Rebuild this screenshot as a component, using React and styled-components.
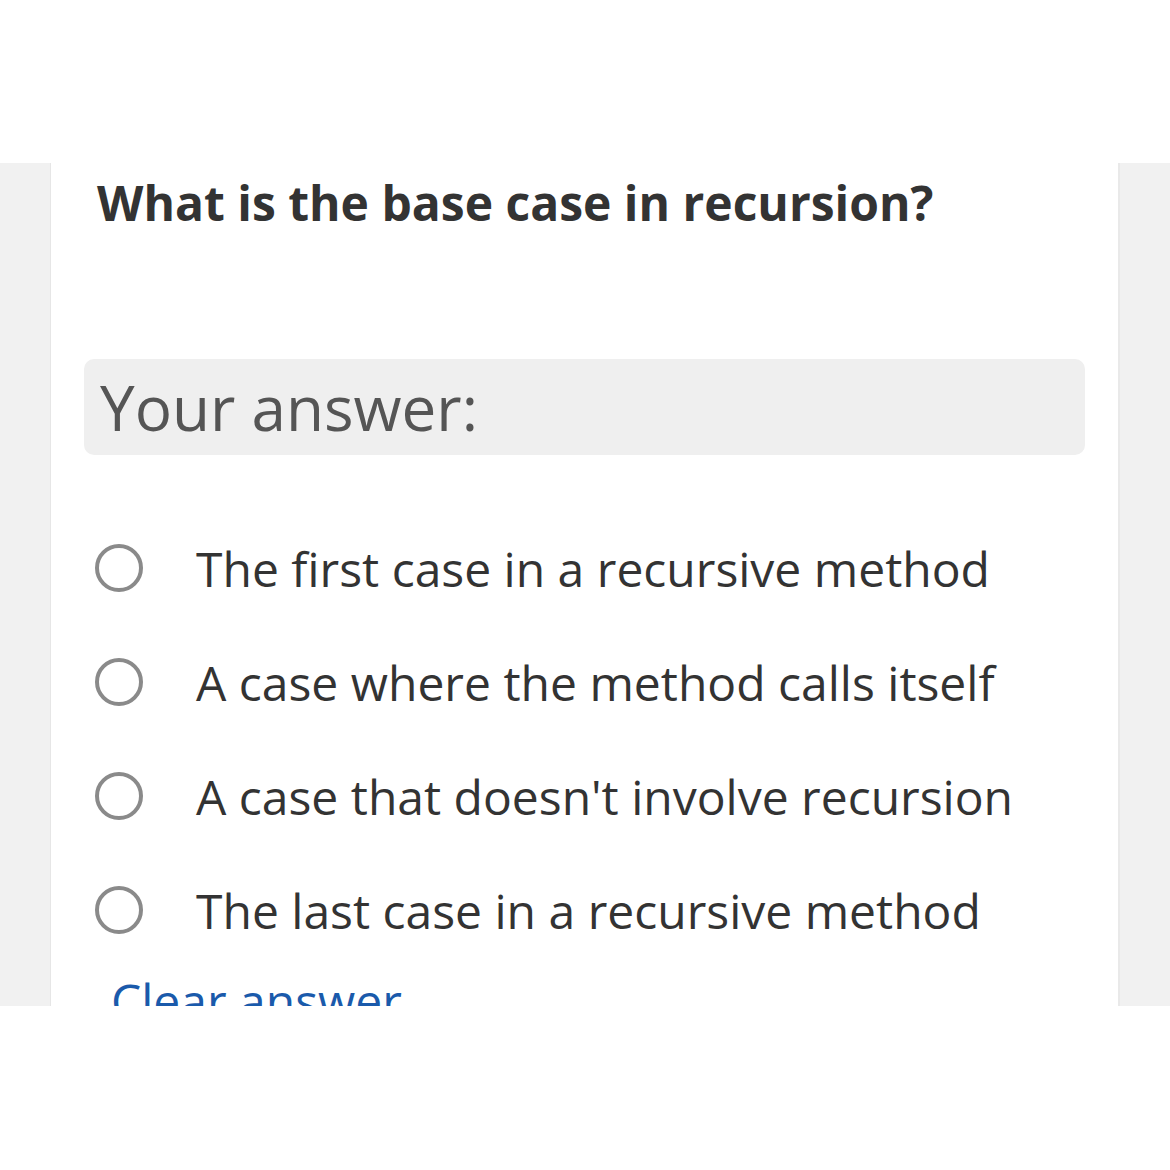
import React from "react";
import styled, { createGlobalStyle } from "styled-components";

const Global = createGlobalStyle`
  html, body { margin: 0; padding: 0; background: #ffffff; }
  body { font-family: "Open Sans", "Noto Sans", sans-serif; }
`;

const Page = styled.div`
  width: 1170px;
  height: 1170px;
  padding-top: 163px;
  box-sizing: border-box;
  background: #ffffff;
`;

const Band = styled.div`
  display: flex;
  height: 843px;
  background: #f1f1f1;
  overflow: hidden;
`;

const Card = styled.div`
  flex: 1;
  margin: 0 50px 0 50px;
  background: #ffffff;
  border-left: 1px solid #e6e6e6;
  border-right: 2px solid #e9e9e9;
  padding: 0 33px;
  display: flex;
  flex-direction: column;
  & > * { flex-shrink: 0; }
`;

const Title = styled.h1`
  margin: 0;
  padding: 8px 0 0 13px;
  font-size: 48px;
  font-weight: 700;
  color: #333333;
  line-height: 64px;
`;

const AnswerBox = styled.div`
  margin-top: 124px;
  height: 96px;
  border-radius: 10px;
  background: #efefef;
  display: flex;
  align-items: center;
  padding-left: 16px;
  font-size: 62px;
  color: #555555;
`;

const Options = styled.div`
  margin-top: 56px;
  display: flex;
  flex-direction: column;
`;

const Option = styled.label`
  display: flex;
  align-items: center;
  height: 114px;
  font-size: 48px;
  color: #333333;
`;

const Radio = styled.span`
  width: 40px;
  height: 40px;
  border: 4px solid #8a8a8a;
  border-radius: 50%;
  margin-left: 11px;
  margin-right: 53px;
  flex-shrink: 0;
`;

const Clear = styled.a`
  margin-top: 4px;
  padding-left: 27px;
  font-size: 48px;
  line-height: 60px;
  color: #1a5aab;
  text-decoration: none;
`;

const options = [
  "The first case in a recursive method",
  "A case where the method calls itself",
  "A case that doesn't involve recursion",
  "The last case in a recursive method",
];

export default function App() {
  return (
    <Page>
      <Global />
      <Band>
        <Card>
          <Title>What is the base case in recursion?</Title>
          <AnswerBox>Your answer:</AnswerBox>
          <Options>
            {options.map((o) => (
              <Option key={o}>
                <Radio />
                {o}
              </Option>
            ))}
          </Options>
          <Clear href="#">Clear answer</Clear>
        </Card>
      </Band>
    </Page>
  );
}
